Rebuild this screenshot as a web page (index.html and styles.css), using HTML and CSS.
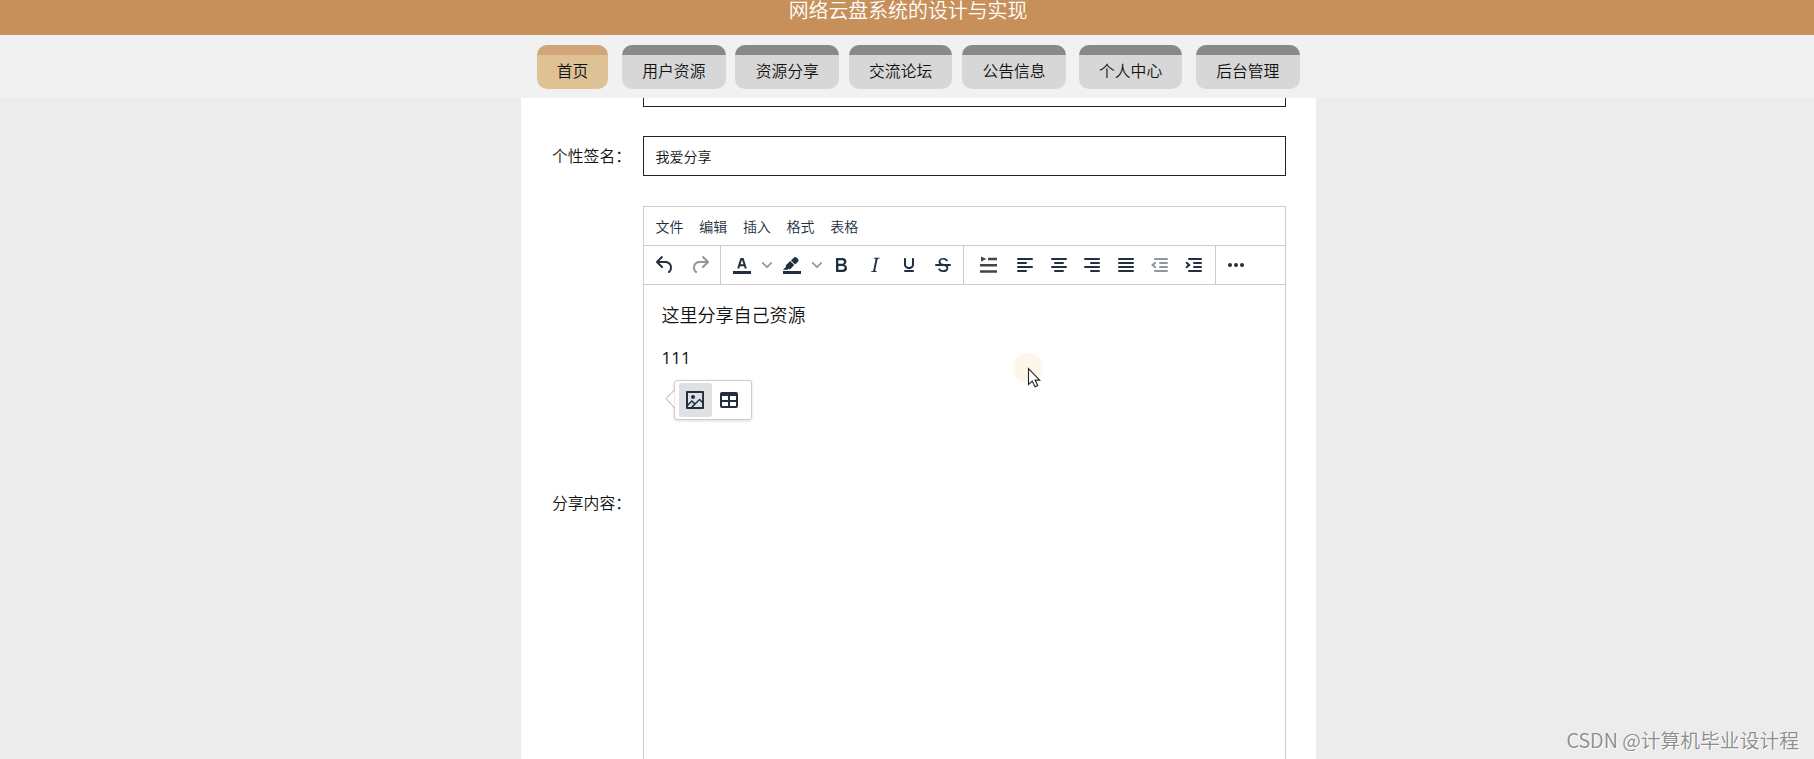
FILE: index.html
```html
<!DOCTYPE html>
<html lang="zh-CN">
  <head>
    <meta charset="utf-8">
    <title>网络云盘系统的设计与实现</title>
    <link rel="stylesheet" href="styles.css">
  </head>
  <body>
    <header class="header">网络云盘系统的设计与实现</header>
    <nav class="nav">
      <a class="tab active">首页</a>
      <a class="tab">用户资源</a>
      <a class="tab">资源分享</a>
      <a class="tab">交流论坛</a>
      <a class="tab">公告信息</a>
      <a class="tab personal">个人中心</a>
      <a class="tab admin">后台管理</a>
    </nav>
    <main class="panel">
      <div class="row"><label></label><div class="field cut"></div></div>
      <div class="row"><label>个性签名：</label><div class="field">我爱分享</div></div>
      <div class="row">
        <label>分享内容：</label>
        <div class="editor">
          <div class="menubar"><span>文件</span><span>编辑</span><span>插入</span><span>格式</span><span>表格</span></div>
          <div class="toolbar">
            <div class="tools history">
              <span class="btn"><svg width="24" height="24"><path d="M6.4 8H12c3.7 0 6.2 2 6.8 5.1.6 2.7-.4 5.6-2.3 6.8a1 1 0 01-1-1.8c1.1-.6 1.8-2.7 1.4-4.6-.5-2.1-2.1-3.5-4.9-3.5H6.4l3.3 3.3a1 1 0 11-1.4 1.4l-5-5a1 1 0 010-1.4l5-5a1 1 0 011.4 1.4L6.4 8z"/></svg></span>
              <span class="btn disabled"><svg width="24" height="24"><path transform="matrix(-1 0 0 1 24 0)" d="M6.4 8H12c3.7 0 6.2 2 6.8 5.1.6 2.7-.4 5.6-2.3 6.8a1 1 0 01-1-1.8c1.1-.6 1.8-2.7 1.4-4.6-.5-2.1-2.1-3.5-4.9-3.5H6.4l3.3 3.3a1 1 0 11-1.4 1.4l-5-5a1 1 0 010-1.4l5-5a1 1 0 011.4 1.4L6.4 8z"/></svg></span>
            </div>
            <div class="tools format">
              <span class="btn"><svg width="24" height="24"><path d="M3 18h18v3H3z"/><path d="M8.2 15.5L11.2 6h1.6l3 9.5M9.4 12.3h5.2" class="stroke"/></svg></span>
              <span class="btn chevron"><svg width="10" height="10"><path d="M8.7 2.2c.3-.3.8-.3 1 0 .4.4.4.9 0 1.2L5.7 7.8c-.3.3-.9.3-1.2 0L.2 3.4a.8.8 0 010-1.2c.3-.3.8-.3 1.1 0L5 6l3.7-3.8z"/></svg></span>
              <span class="btn"><svg width="24" height="24"><path d="M3 18h18v3H3z"/><path d="M7.7 16.7H3l3.3-3.3-.7-.8L10.2 8l4 4.1-4 4.2c-.2.2-.6.2-.8 0l-.6-.7-1.1 1.1zm5-7.5L11 7.4l3-2.9a2 2 0 012.6 0L18 6c.7.7.7 2 0 2.7l-2.9 2.9-1.8-1.8-.5-.6z"/></svg></span>
              <span class="btn chevron"><svg width="10" height="10"><path d="M8.7 2.2c.3-.3.8-.3 1 0 .4.4.4.9 0 1.2L5.7 7.8c-.3.3-.9.3-1.2 0L.2 3.4a.8.8 0 010-1.2c.3-.3.8-.3 1.1 0L5 6l3.7-3.8z"/></svg></span>
              <span class="btn"><svg width="24" height="24"><path d="M7.8 19c-.3 0-.5 0-.6-.2l-.2-.5V5.7c0-.2 0-.4.2-.5l.6-.2h5c1.5 0 2.7.3 3.5 1 .7.6 1.1 1.4 1.1 2.5a3 3 0 01-.6 1.9c-.4.6-1 1-1.6 1.2.4.1.9.3 1.3.6s.8.7 1 1.2c.4.4.5 1 .5 1.6 0 1.3-.4 2.3-1.3 3-.8.7-2.1 1-3.8 1H7.8zm5-8.3c.6 0 1.2-.1 1.6-.5.4-.3.6-.7.6-1.3 0-1.1-.8-1.7-2.3-1.7H9.3v3.5h3.4zm.5 6c.7 0 1.3-.1 1.7-.4.4-.4.6-.9.6-1.5s-.2-1-.7-1.4c-.4-.3-1-.4-2-.4H9.4v3.8h4z"/></svg></span>
              <span class="btn"><svg width="24" height="24"><path d="M16.7 4.7l-.1.9h-.3c-.6 0-1 0-1.4.3-.3.3-.4.6-.5 1.1l-2.1 9.8v.6c0 .5.4.8 1.4.8h.2l-.2.8H8l.2-.8h.2c1.1 0 1.8-.5 2-1.5l2-9.8.1-.5c0-.6-.4-.8-1.4-.8h-.3l.2-.9h5.8z"/></svg></span>
              <span class="btn"><svg width="24" height="24"><path d="M16 5c.6 0 1 .4 1 1v5.5a4 4 0 01-.4 1.8l-1 1.4a5.3 5.3 0 01-5.5 1 5 5 0 01-1.6-1c-.5-.4-.8-.9-1.1-1.4a4 4 0 01-.4-1.8V6c0-.6.4-1 1-1s1 .4 1 1v5.5c0 .3 0 .6.2 1l.6.7a3.3 3.3 0 002.2.8 3.4 3.4 0 002.2-.8c.3-.2.4-.5.6-.8l.2-.9V6c0-.6.4-1 1-1zM8 17h8c.6 0 1 .4 1 1s-.4 1-1 1H8a1 1 0 010-2z"/></svg></span>
              <span class="btn"><svg width="24" height="24"><path d="M15.6 8.5c-.5-.7-1-1.1-1.3-1.3-.6-.4-1.3-.6-2-.6-2.7 0-2.8 1.7-2.8 2.1 0 1.6 1.8 2 3.2 2.3 4.4.9 4.6 2.8 4.6 3.9 0 1.4-.7 4.1-5 4.1A6.2 6.2 0 017 16.4l1.5-1.1c.4.6 1.6 2 3.7 2 1.6 0 2.5-.4 3-1.2.4-.8.3-2-.8-2.6-.7-.4-1.6-.7-2.9-1-1-.2-3.9-.8-3.9-3.6C7.6 6 10.3 5 12.4 5c2.9 0 4.2 1.6 4.7 2.4l-1.5 1.1z"/><path d="M5 11h14a1 1 0 010 2H5a1 1 0 010-2z"/></svg></span>
            </div>
            <div class="tools align">
              <span class="btn lineheight"><svg width="24" height="24"><path d="M12 4.7h9v2.6h-9zM4 10.9h17v2.5H4zM4 17.2h17v2.5H4zM5 3.5l5.5 2.5L5 8.5z"/></svg></span>
              <span class="btn"><svg width="24" height="24"><path class="lines" d="M5 6h14M5 10h8M5 14h14M5 18h8"/></svg></span>
              <span class="btn"><svg width="24" height="24"><path class="lines" d="M5 6h14M8 10h8M5 14h14M8 18h8"/></svg></span>
              <span class="btn"><svg width="24" height="24"><path class="lines" d="M5 6h14M11 10h8M5 14h14M11 18h8"/></svg></span>
              <span class="btn"><svg width="24" height="24"><path class="lines" d="M5 6h14M5 10h14M5 14h14M5 18h14"/></svg></span>
              <span class="btn disabled"><svg width="24" height="24"><path class="lines" d="M7 6h12M12 10h7M12 14h7M7 18h12M7.2 9.8L4.6 12l2.6 2.2"/></svg></span>
              <span class="btn"><svg width="24" height="24"><path class="lines" d="M7 6h12M12 10h7M12 14h7M7 18h12M4.6 9.8L7.2 12l-2.6 2.2"/></svg></span>
            </div>
            <div class="tools">
              <span class="btn"><svg width="24" height="24"><circle cx="6" cy="12" r="2"/><circle cx="12" cy="12" r="2"/><circle cx="18" cy="12" r="2"/></svg></span>
            </div>
          </div>
          <div class="content">
            <p>这里分享自己资源</p>
            <p>111</p>
            <div class="popup">
              <svg class="arrow" width="10" height="20"><path d="M9.5 1L1 9.5 9.5 19"/></svg>
              <span class="btn selected"><svg width="24" height="24"><path fill-rule="evenodd" d="M5 15.7l3.3-3.2c.3-.3.7-.3 1 0L12 15l4.1-4c.3-.4.8-.4 1 0l2 1.9V5H5v10.7zM5 18V19h3l2.8-2.9-2-2L5 17.9zm14-3l-2.5-2.4-6.4 6.5H19v-4zM4 3h16c.6 0 1 .4 1 1v16c0 .6-.4 1-1 1H4a1 1 0 01-1-1V4c0-.6.4-1 1-1zm6 8a2 2 0 100-4 2 2 0 000 4z"/></svg></span>
              <span class="btn"><svg width="24" height="24"><path fill-rule="evenodd" d="M19 4a2 2 0 012 2v12a2 2 0 01-2 2H5a2 2 0 01-2-2V6c0-1.1.9-2 2-2h14zM5 14v4h6v-4H5zm14 0h-6v4h6v-4zm0-6h-6v4h6V8zM5 12h6V8H5v4z"/></svg></span>
            </div>
          </div>
        </div>
      </div>
    </main>
    <div class="pointer">
      <svg width="44" height="44"><circle cx="15" cy="15" r="15" fill="#fcf7ea"/><path d="M15.5 15.5v16l3.7-3.4 2.8 5.6 2.7-1.3-2.6-5.3h4.6z" fill="#fff" stroke="#222" stroke-width="1.1"/></svg>
    </div>
    <div class="watermark">CSDN @计算机毕业设计程</div>
  </body>
</html>
```
FILE: styles.css
```css
* { box-sizing: border-box; }
body {
  margin: 0;
  height: 759px;
  overflow: hidden;
  position: relative;
  background: #ececec;
  color: #111;
  font-family: "Noto Sans CJK SC", sans-serif;
  font-weight: 350;
  font-size: 16px;
}

/* HEADER ====================================== */
.header {
  height: 35px;
  background: #c7905a;
  color: #fff;
  font-size: 19.9px;
  line-height: 20px;
  text-align: center;
  padding-left: 2px;
}
.nav {
  height: 63px;
  padding: 9.5px 0 0 536.7px;
  background: #f1f1f1;
  display: flex;
  gap: 9.8px;
}
.tab {
  width: 103.6px;
  height: 44px;
  border-radius: 10px;
  background: linear-gradient(#898989 10px, #d7d7d7 10px);
  line-height: 33px;
  padding-top: 9.5px;
  font-size: 15.8px;
  text-align: center;
}
.tab.active {
  width: 71.6px;
  margin-right: 4px;
  background: linear-gradient(#d1a479 10px, #dfc196 10px);
}
.tab.personal { margin-left: 3.2px; }
.tab.admin { margin-left: 3.8px; }

/* FORM ======================================== */
.panel {
  width: 795px;
  height: 661px;
  margin-left: 521px;
  padding-left: 31px;
  background: #fff;
  overflow: hidden;
}
.row {
  display: flex;
  align-items: center;
  margin-bottom: 29px;
}
.row label {
  width: 91px;
  padding-bottom: 2px;
  font-size: 15.8px;
  white-space: nowrap;
}
.field {
  width: 643px;
  height: 40px;
  border: 1px solid #222;
  padding-left: 11.5px;
  font-size: 14px;
  line-height: 39px;
}
.field.cut {
  height: 9px;
  border-top: none;
}

/* EDITOR ====================================== */
.editor {
  width: 643px;
  height: 596px;
  margin-top: 1px;
  border: 1px solid #ccc;
}
.menubar {
  height: 39px;
  padding-left: 11.5px;
  border-bottom: 1px solid #ccc;
  display: flex;
  gap: 15.7px;
  font-size: 14px;
  line-height: 38px;
  color: #222f3e;
}
.toolbar {
  height: 39px;
  border-bottom: 1px solid #ccc;
  display: flex;
}
.tools {
  display: flex;
  align-items: center;
  padding: 0 4px;
  border-right: 1px solid #ccc;
}
.tools:last-child { border-right: none; padding-left: 3px; }
.history { width: 77px; gap: 1px; padding-left: 4px; padding-right: 3px; }
.format { width: 243px; padding-left: 4px; padding-right: 0; }
.align { width: 252px; padding-left: 7px; }
.btn {
  width: 33.8px;
  height: 34px;
  flex: none;
  display: flex;
  align-items: center;
  justify-content: center;
}
.btn svg { fill: #222f3e; }
.chevron { width: 16px; }
.chevron svg, .disabled svg { opacity: .5; }
.lineheight { width: 37px; padding-right: 3px; }
.btn.lineheight svg { fill: #444; }
.stroke {
  fill: none;
  stroke: #222f3e;
  stroke-width: 2;
}
.lines {
  fill: none;
  stroke: #222f3e;
  stroke-width: 2;
  stroke-linecap: round;
}
.content {
  padding: 17px 17.5px;
  font-size: 18px;
  color: #111;
}
.content p {
  margin: 0 0 18px;
  line-height: 25px;
}
.content p + p {
  font-family: "Open Sans", "Noto Sans", sans-serif;
  font-weight: 400;
  font-size: 17px;
}
.popup {
  position: relative;
  width: 78px;
  height: 40px;
  margin: -8px 0 0 12px;
  padding-left: 4px;
  border: 1px solid #ccc;
  border-radius: 3px;
  box-shadow: 0 1px 3px rgba(0, 0, 0, .15);
  background: #fff;
  display: flex;
  align-items: center;
}
.arrow {
  position: absolute;
  left: -10px;
  top: 8px;
  fill: #fff;
  stroke: #aaa;
}
.selected {
  background: #dee0e2;
  border-radius: 3px;
}

/* OVERLAYS ==================================== */
.pointer {
  position: absolute;
  left: 1013px;
  top: 353px;
}
.watermark {
  position: absolute;
  right: 15px;
  bottom: 4px;
  font-size: 19.8px;
  line-height: 30px;
  color: #8c8c8c;
  text-shadow: 1px 1px 0 #fff;
}
```
